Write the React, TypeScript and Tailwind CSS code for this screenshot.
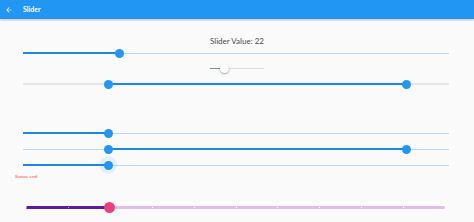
import React from "react";

type TrackProps = {
  from: number;
  to: number;
  thumbs: number[];
  inactive: string;
  inactiveH?: string;
  halo?: boolean;
};

function Track({ from, to, thumbs, inactive, inactiveH = "h-px", halo }: TrackProps) {
  return (
    <div className="relative ml-[23px] mr-[25px] h-full flex items-center">
      <div className={`w-full ${inactiveH} ${inactive}`} />
      <div
        className="absolute h-[2px] bg-[#1e88e5]"
        style={{ left: `${from * 100}%`, width: `${(to - from) * 100}%` }}
      />
      {thumbs.map((t, i) => (
        <React.Fragment key={i}>
          {halo && (
            <div
              className="absolute w-[18px] h-[18px] -ml-[9px] rounded-full bg-[#2196f3]/10"
              style={{ left: `${t * 100}%` }}
            />
          )}
          <div
            className="absolute w-[9px] h-[9px] -ml-[4.5px] rounded-full bg-[#2196f3]"
            style={{ left: `${t * 100}%` }}
          />
        </React.Fragment>
      ))}
    </div>
  );
}

export default function App() {
  const ticks = Array.from({ length: 11 }, (_, i) => i / 10);
  return (
    <div
      className="w-[474px] h-[222px] bg-[#fafafa] overflow-hidden flex flex-col"
      style={{ fontFamily: "Lato, 'Noto Sans', sans-serif" }}
    >
      <div className="h-[19px] bg-[#2196f3] flex items-center shadow-[0_1px_2px_rgba(0,0,0,0.25)] relative z-10 shrink-0">
        <svg width="8" height="8" viewBox="0 0 24 24" className="ml-[5px]">
          <path d="M20 11H7.83l5.59-5.59L12 4l-8 8 8 8 1.41-1.41L7.83 13H20v-2z" fill="white" />
        </svg>
        <span className="ml-[10px] text-[7px] font-bold text-white">Slider</span>
      </div>
      <div className="h-[16px] shrink-0" />
      <div className="h-[12px] flex items-center justify-center text-[8px] font-normal text-[#4a4a4a] shrink-0">
        Slider Value: 22
      </div>
      <div className="h-[12px] shrink-0">
        <Track from={0} to={0.227} thumbs={[0.227]} inactive="bg-[#b8d8f6]" />
      </div>
      <div className="h-[18px] shrink-0 flex items-center justify-center">
        <div className="relative w-[54px] h-full flex items-center ml-[-1px]">
          <div className="w-full h-px bg-[#dcdcdc]" />
          <div className="absolute left-0 w-[12px] h-px bg-[#78909c]" />
          <div className="absolute left-[10px] w-[9px] h-[9px] rounded-full bg-white shadow-[0_1px_2px_rgba(0,0,0,0.35)]" />
        </div>
      </div>
      <div className="h-[14px] shrink-0">
        <Track from={0.2} to={0.9} thumbs={[0.2, 0.9]} inactive="bg-[#e2e6ea]" inactiveH="h-[2px]" />
      </div>
      <div className="h-[34px] shrink-0" />
      <div className="h-[16px] shrink-0">
        <Track from={0} to={0.2} thumbs={[0.2]} inactive="bg-[#b8d8f6]" />
      </div>
      <div className="h-[16px] shrink-0">
        <Track from={0.2} to={0.9} thumbs={[0.2, 0.9]} inactive="bg-[#b8d8f6]" />
      </div>
      <div className="h-[16px] shrink-0">
        <Track from={0} to={0.2} thumbs={[0.2]} inactive="bg-[#b8d8f6]" halo />
      </div>
      <div className="h-[8px] shrink-0 flex items-center pl-[15px] text-[4.5px] text-[#f44336]">
        Status: end
      </div>
      <div className="h-[19px] shrink-0" />
      <div className="h-[14px] shrink-0">
        <div className="relative mx-[26px] w-[419px] h-full flex items-center">
          <div className="w-full h-[3px] rounded-full bg-[#e1bee7]" />
          <div className="absolute left-0 w-[20%] h-[3px] rounded-full bg-[#5e1d9c]" />
          {ticks.map((t, i) => (
            <div
              key={i}
              className={`absolute w-px h-px ${t < 0.2 ? "bg-[#b39ddb]" : "bg-white"}`}
              style={{ left: `${t * 100}%` }}
            />
          ))}
          <div className="absolute left-[20%] -ml-[5.5px] w-[11px] h-[11px] rounded-full bg-[#ec407a]" />
        </div>
      </div>
    </div>
  );
}
